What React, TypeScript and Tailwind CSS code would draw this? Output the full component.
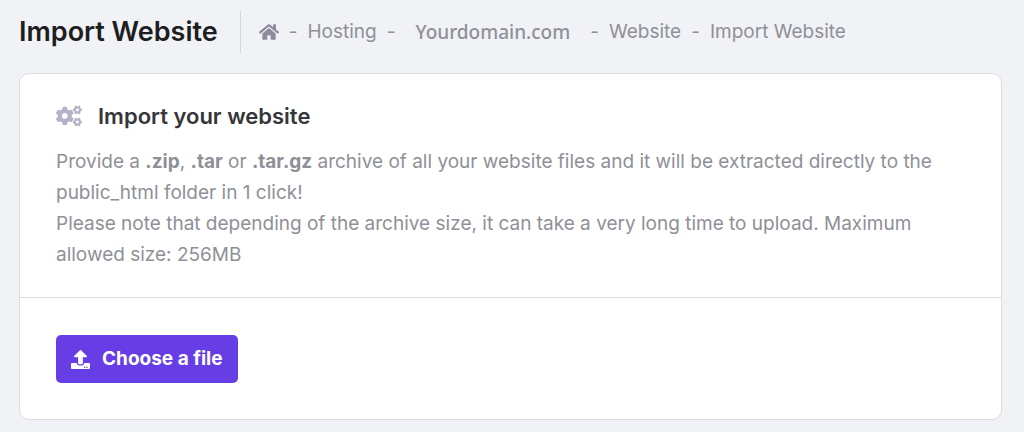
import { FaCogs, FaHome, FaUpload } from "react-icons/fa";

export default function App() {
  return (
    <div className="min-h-screen bg-[#f1f2f6] pt-[11px] pr-[22px] pb-3 pl-[19px] font-['Inter',sans-serif] text-[#8f9097]">
      <header className="flex h-[42px] items-center">
        <h1 className="text-[27px] leading-8 font-semibold whitespace-nowrap text-[#1d1e20]">Import Website</h1>
        <nav aria-label="Breadcrumb" className="ml-[22px] flex h-full items-center gap-2.5 border-l border-[#d5d6dc] pl-[18px] text-[19px] whitespace-nowrap">
          <a href="#home" aria-label="Home"><FaHome className="size-5 text-[#8c8a9b]" /></a>
          <span>-</span>
          <a href="#hosting">Hosting</a>
          <span>-</span>
          <a href="#domain" className="mx-2.5 font-['Noto_Sans',sans-serif] font-medium">Yourdomain.com</a>
          <span>-</span>
          <a href="#website">Website</a>
          <span>-</span>
          <span>Import Website</span>
        </nav>
      </header>
      <main className="mt-5 rounded-[10px] border border-[#dadce0] bg-white">
        <section className="border-b border-[#dadce0] px-9 pt-[26px] pb-[27px]">
          <h2 className="flex items-center gap-4 text-[22px] leading-8 font-semibold text-[#36363a]">
            <FaCogs className="size-[26px] text-[#b3b2c8]" />
            Import your website
          </h2>
          <p className="mt-3.5 text-[19px] leading-[31px]">
            Provide a <b>.zip</b>, <b>.tar</b> or <b>.tar.gz</b> archive of all your website files and it will be extracted directly to the public_html folder in 1 click!
            <br />
            Please note that depending of the archive size, it can take a very long time to upload. Maximum allowed size: 256MB
          </p>
        </section>
        <section className="px-9 pt-[37px] pb-9">
          <button className="flex h-12 items-center gap-3 rounded-[5px] bg-[#673de6] px-[15px] text-[19px] leading-6 font-bold text-white">
            <FaUpload className="size-[19px]" />
            Choose a file
          </button>
        </section>
      </main>
    </div>
  );
}
